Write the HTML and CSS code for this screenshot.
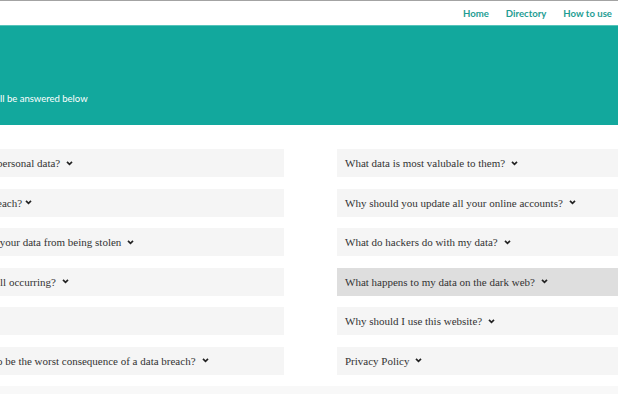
FILE: index.html
```html
<!DOCTYPE html>
<html>
<head>
<meta charset="utf-8">
<link rel="stylesheet" href="styles.css">
</head>
<body>
<nav class="topnav">
  <a class="navlink" href="#">Home</a>
  <a class="navlink" href="#">Directory</a>
  <a class="navlink" href="#">How to use</a>
</nav>
<header class="hero">
  <p class="hero-text">ll be answered below</p>
</header>
<main class="faq">
  <div class="col col-left">
    <div class="item"><span class="q">personal data?</span><svg class="chev" viewBox="0 0 8 6"><polyline points="1,1 4,4 7,1"/></svg></div>
    <div class="item"><span class="q">each?</span><svg class="chev tight" viewBox="0 0 8 6"><polyline points="1,1 4,4 7,1"/></svg></div>
    <div class="item"><span class="q">&nbsp;your data from being stolen</span><svg class="chev" viewBox="0 0 8 6"><polyline points="1,1 4,4 7,1"/></svg></div>
    <div class="item"><span class="q">ill occurring?</span><svg class="chev" viewBox="0 0 8 6"><polyline points="1,1 4,4 7,1"/></svg></div>
    <div class="item"></div>
    <div class="item"><span class="q">o be the worst consequence of a data breach?</span><svg class="chev" viewBox="0 0 8 6"><polyline points="1,1 4,4 7,1"/></svg></div>
  </div>
  <div class="col col-right">
    <div class="item pad"><span class="q">What data is most valubale to them?</span><svg class="chev" viewBox="0 0 8 6"><polyline points="1,1 4,4 7,1"/></svg></div>
    <div class="item pad"><span class="q">Why should you update all your online accounts?</span><svg class="chev" viewBox="0 0 8 6"><polyline points="1,1 4,4 7,1"/></svg></div>
    <div class="item pad"><span class="q">What do hackers do with my data?</span><svg class="chev" viewBox="0 0 8 6"><polyline points="1,1 4,4 7,1"/></svg></div>
    <div class="item pad hover"><span class="q">What happens to my data on the dark web?</span><svg class="chev" viewBox="0 0 8 6"><polyline points="1,1 4,4 7,1"/></svg></div>
    <div class="item pad"><span class="q">Why should I use this website?</span><svg class="chev" viewBox="0 0 8 6"><polyline points="1,1 4,4 7,1"/></svg></div>
    <div class="item pad"><span class="q">Privacy Policy</span><svg class="chev" viewBox="0 0 8 6"><polyline points="1,1 4,4 7,1"/></svg></div>
  </div>
</main>
<footer class="foot"></footer>
</body>
</html>
```
FILE: styles.css
```css
html, body {
  margin: 0;
  padding: 0;
  background: #ffffff;
  overflow: hidden;
  width: 618px;
  height: 394px;
}
.topnav {
  border-top: 1px solid #a3a3a3;
  display: flex;
  justify-content: flex-end;
  align-items: center;
  gap: 17px;
  padding-right: 6px;
  box-sizing: border-box;
  height: 25px;
}
.navlink {
  font-family: Lato, "Open Sans", sans-serif;
  font-size: 9.6px;
  font-weight: 700;
  color: #1e9d93;
  text-decoration: none;
}
.hero {
  background: #12a89d;
  border-top: 1px solid #56c4ba;
  height: 99px;
  display: flex;
  align-items: flex-end;
}
.hero-text {
  margin: 0 0 21px 0;
  font-family: Lato, "Open Sans", sans-serif;
  font-size: 9.5px;
  color: #ffffff;
}
.faq {
  display: grid;
  grid-template-columns: 284px 281px;
  column-gap: 53px;
  padding-top: 24px;
  height: 261px;
  box-sizing: border-box;
}
.col {
  display: flex;
  flex-direction: column;
  gap: 11.6px;
}
.item {
  height: 28px;
  background: #f5f5f5;
  display: flex;
  align-items: center;
  font-family: "Liberation Serif", "Times New Roman", serif;
  font-size: 11px;
  color: #333333;
  white-space: nowrap;
  overflow: hidden;
}
.col-left .item {
  margin-left: -3px;
}
.col-left .item + .item {
  margin-left: -3px;
}
.pad {
  padding-left: 8px;
}
.hover {
  background: #dedede;
}
.chev {
  width: 7px;
  height: 5px;
  margin-left: 6px;
  fill: none;
  stroke: #222222;
  stroke-width: 2;
}
.chev.tight {
  margin-left: 3px;
}
.foot {
  background: #f8f8f8;
  height: 12px;
}
```
